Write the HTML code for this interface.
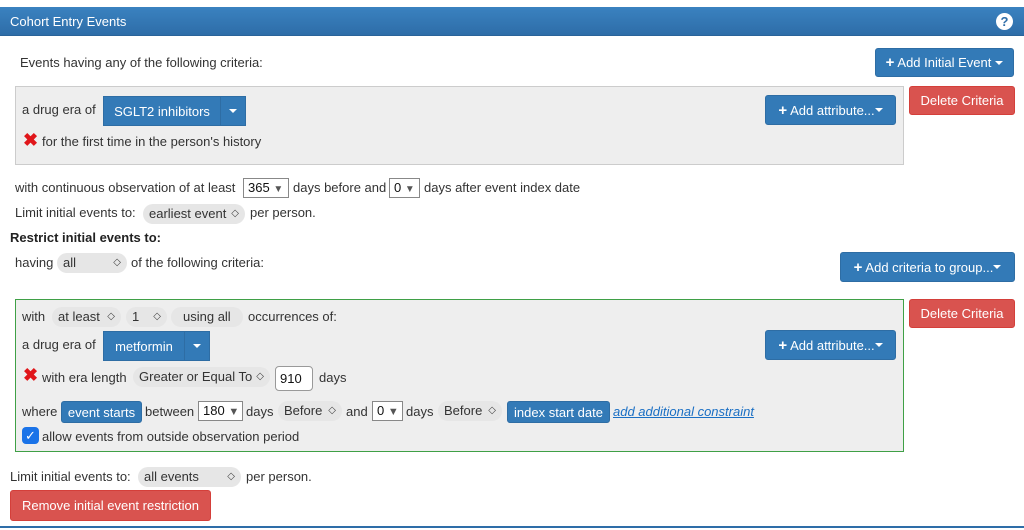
<!DOCTYPE html>
<html><head><style>
*{box-sizing:border-box;margin:0;padding:0}
body{width:1024px;height:530px;background:#fff;font-family:"Liberation Sans",sans-serif;font-size:13px;color:#333;position:relative;overflow:hidden}
.a{position:absolute;white-space:nowrap}
.t{line-height:16px}
.btn{position:absolute;background:#337ab7;border:1px solid #2e6da4;color:#fff;border-radius:3px;display:flex;align-items:center;justify-content:center;font-size:13px}
.red{background:#d9534f;border-color:#d43f3a}
.pill{position:absolute;background:#e6e6e6;border-radius:10px;height:20px;line-height:20px;padding-left:6px;font-size:13px;color:#333}
.pill .c{position:absolute;right:6px;top:0;font-size:10px;color:#444}
.sel{position:absolute;background:#fff;border:1px solid #888;height:20px;line-height:18px;padding-left:4px;font-size:13px;color:#111}
.x{color:#e0161a;font-weight:bold;font-size:18px}
.caret{display:inline-block;border-left:4px solid transparent;border-right:4px solid transparent;border-top:4px solid #fff;margin-left:4px;vertical-align:middle}
</style></head><body>
<div class="a" style="left:0;top:7px;width:1024px;height:29px;background:linear-gradient(#3a82c0,#2e6da8);border-bottom:1px solid #2a6399"></div>
<div class="a t" style="left:10px;top:14px;color:#fff">Cohort Entry Events</div>
<div class="a" style="left:996px;top:13px;width:17px;height:17px;border-radius:50%;background:#fff;color:#2e6da8;font-weight:bold;font-size:13px;text-align:center;line-height:17px">?</div>

<div class="a t" style="left:20px;top:55px">Events having any of the following criteria:</div>
<div class="btn" style="left:875px;top:48px;width:139px;height:29px"><b style="font-size:15px;margin-right:3px">+</b>Add Initial Event<span class="caret"></span></div>

<div class="a" style="left:15px;top:86px;width:889px;height:79px;background:#eee;border:1px solid #ccc"></div>
<div class="a t" style="left:22px;top:102px">a drug era of</div>
<div class="btn" style="left:103px;top:96px;width:118px;height:30px;border-radius:0">SGLT2 inhibitors</div>
<div class="btn" style="left:220px;top:96px;width:26px;height:30px;border-radius:0"><span class="caret" style="margin:0"></span></div>
<div class="btn" style="left:765px;top:95px;width:131px;height:30px"><b style="font-size:15px;margin-right:3px">+</b>Add attribute...<span class="caret" style="margin:0"></span></div>
<div class="btn red" style="left:909px;top:86px;width:106px;height:29px">Delete Criteria</div>
<div class="a x" style="left:23px;top:130px">✖</div>
<div class="a t" style="left:42px;top:134px">for the first time in the person's history</div>

<div class="a t" style="left:15px;top:180px">with continuous observation of at least</div>
<div class="sel" style="left:243px;top:178px;width:46px">365 <span style="font-size:10px;color:#555">▼</span></div>
<div class="a t" style="left:293px;top:180px">days before and</div>
<div class="sel" style="left:389px;top:178px;width:31px">0 <span style="font-size:10px;color:#555">▼</span></div>
<div class="a t" style="left:424px;top:180px">days after event index date</div>

<div class="a t" style="left:15px;top:205px">Limit initial events to:</div>
<div class="pill" style="left:143px;top:204px;width:102px">earliest event<span class="c">◇</span></div>
<div class="a t" style="left:250px;top:205px">per person.</div>

<div class="a t" style="left:10px;top:230px;font-weight:bold;color:#222">Restrict initial events to:</div>
<div class="a t" style="left:15px;top:255px">having</div>
<div class="pill" style="left:57px;top:253px;width:70px">all<span class="c">◇</span></div>
<div class="a t" style="left:131px;top:255px">of the following criteria:</div>
<div class="btn" style="left:840px;top:252px;width:175px;height:30px"><b style="font-size:15px;margin-right:3px">+</b>Add criteria to group...<span class="caret" style="margin:0"></span></div>

<div class="a" style="left:15px;top:299px;width:889px;height:153px;background:#eee;border:1px solid #3fa046"></div>
<div class="a t" style="left:22px;top:309px">with</div>
<div class="pill" style="left:52px;top:307px;width:69px">at least<span class="c">◇</span></div>
<div class="pill" style="left:126px;top:307px;width:41px">1<span class="c">◇</span></div>
<div class="pill" style="left:171px;top:307px;width:72px;padding-left:12px">using all</div>
<div class="a t" style="left:248px;top:309px">occurrences of:</div>
<div class="a t" style="left:22px;top:337px">a drug era of</div>
<div class="btn" style="left:103px;top:331px;width:82px;height:30px;border-radius:0">metformin</div>
<div class="btn" style="left:184px;top:331px;width:26px;height:30px;border-radius:0"><span class="caret" style="margin:0"></span></div>
<div class="btn" style="left:765px;top:330px;width:131px;height:30px"><b style="font-size:15px;margin-right:3px">+</b>Add attribute...<span class="caret" style="margin:0"></span></div>
<div class="btn red" style="left:909px;top:299px;width:106px;height:29px">Delete Criteria</div>
<div class="a x" style="left:23px;top:365px">✖</div>
<div class="a t" style="left:42px;top:370px">with era length</div>
<div class="pill" style="left:133px;top:367px;width:137px">Greater or Equal To<span class="c">◇</span></div>
<div class="a" style="left:275px;top:366px;width:38px;height:25px;background:#fff;border:1px solid #999;border-radius:4px;line-height:23px;padding-left:4px;color:#111">910</div>
<div class="a t" style="left:319px;top:370px">days</div>
<div class="a t" style="left:22px;top:404px">where</div>
<div class="btn" style="left:61px;top:401px;width:81px;height:22px">event starts</div>
<div class="a t" style="left:145px;top:404px">between</div>
<div class="sel" style="left:198px;top:401px;width:45px">180 <span style="font-size:11px;color:#555">▼</span></div>
<div class="a t" style="left:246px;top:404px">days</div>
<div class="pill" style="left:278px;top:401px;width:64px">Before<span class="c">◇</span></div>
<div class="a t" style="left:346px;top:404px">and</div>
<div class="sel" style="left:372px;top:401px;width:31px">0 <span style="font-size:11px;color:#555">▼</span></div>
<div class="a t" style="left:406px;top:404px">days</div>
<div class="pill" style="left:438px;top:401px;width:64px">Before<span class="c">◇</span></div>
<div class="btn" style="left:507px;top:401px;width:103px;height:22px">index start date</div>
<div class="a t" style="left:613px;top:404px;color:#1a6fc4;font-style:italic;text-decoration:underline">add additional constraint</div>
<div class="a" style="left:22px;top:427px;width:17px;height:17px;background:#1a73e8;border-radius:4px;color:#fff;font-size:13px;text-align:center;line-height:17px">✓</div>
<div class="a t" style="left:42px;top:429px">allow events from outside observation period</div>

<div class="a t" style="left:10px;top:469px">Limit initial events to:</div>
<div class="pill" style="left:138px;top:467px;width:103px">all events<span class="c">◇</span></div>
<div class="a t" style="left:246px;top:469px">per person.</div>
<div class="btn red" style="left:10px;top:490px;width:201px;height:31px">Remove initial event restriction</div>
<div class="a" style="left:0;top:526px;width:1024px;height:2px;background:#2e6da8"></div>
</body></html>
